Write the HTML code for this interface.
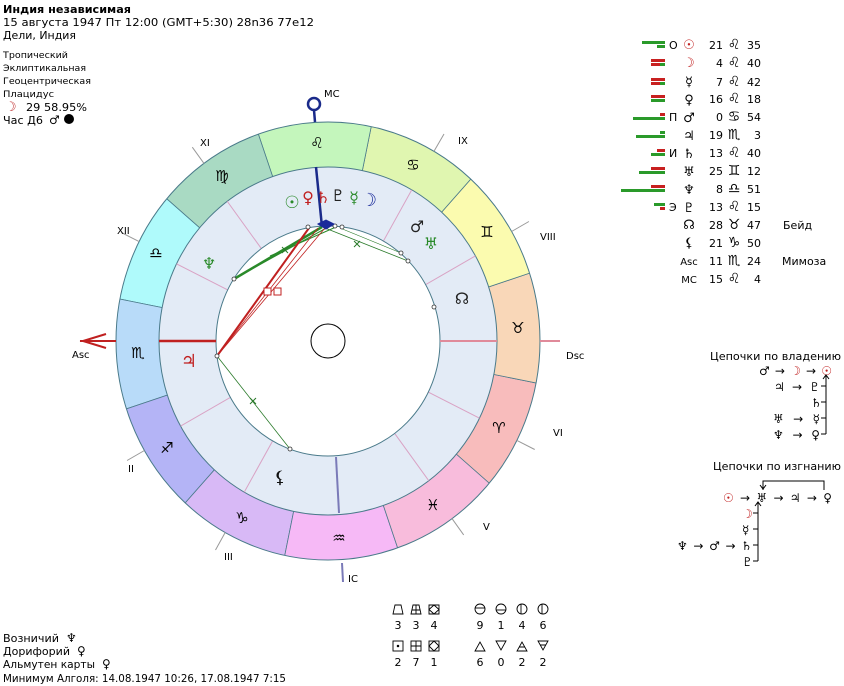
<!DOCTYPE html>
<html><head><meta charset="utf-8"><style>
html,body{margin:0;padding:0;background:#fff;}
svg{display:block;}
text{font-family:"DejaVu Sans","Liberation Sans",sans-serif;fill:#000;}
.g{font-family:"DejaVu Sans",sans-serif;}
</style></head><body>
<svg width="844" height="686" viewBox="0 0 844 686" xmlns="http://www.w3.org/2000/svg">
<defs>
<clipPath id="co"><ellipse cx="328" cy="341" rx="212" ry="219"/></clipPath>
<clipPath id="ch"><ellipse cx="328" cy="341" rx="169" ry="174"/></clipPath>
</defs>
<text x="3" y="13" font-size="11" font-weight="bold" textLength="128" lengthAdjust="spacingAndGlyphs">Индия независимая</text>
<text x="3" y="26" font-size="11" textLength="311" lengthAdjust="spacingAndGlyphs">15 августа 1947  Пт  12:00 (GMT+5:30) 28n36  77e12</text>
<text x="3" y="39" font-size="11" textLength="73" lengthAdjust="spacingAndGlyphs">Дели, Индия</text>
<text x="3" y="58" font-size="9" textLength="65" lengthAdjust="spacingAndGlyphs">Тропический</text>
<text x="3" y="71" font-size="9" textLength="83" lengthAdjust="spacingAndGlyphs">Эклиптикальная</text>
<text x="3" y="84" font-size="9" textLength="88" lengthAdjust="spacingAndGlyphs">Геоцентрическая</text>
<text x="3" y="97" font-size="9" textLength="51" lengthAdjust="spacingAndGlyphs">Плацидус</text>
<text x="5" y="111" font-size="13" class="g" style="fill:#c03030">☽</text>
<text x="26" y="111" font-size="11" textLength="61" lengthAdjust="spacingAndGlyphs">29 58.95%</text>
<text x="3" y="124" font-size="11" textLength="40" lengthAdjust="spacingAndGlyphs">Час Д6</text>
<text x="49" y="124" font-size="12" class="g">♂</text>
<circle cx="69" cy="119" r="5" fill="#000"/>

<g clip-path="url(#co)" stroke="#4a7a8a" stroke-width="0.8">
<polygon points="328,341 553,539.4 622.1,400.3" fill="#f8bcbc"/>
<polygon points="328,341 622.1,400.3 612.3,245.3" fill="#f9d7b8"/>
<polygon points="328,341 612.3,245.3 526.4,116" fill="#fbfbaf"/>
<polygon points="328,341 526.4,116 387.3,46.9" fill="#e0f6b0"/>
<polygon points="328,341 387.3,46.9 232.3,56.7" fill="#c4f6bc"/>
<polygon points="328,341 232.3,56.7 103,142.6" fill="#a9dac3"/>
<polygon points="328,341 103,142.6 33.9,281.7" fill="#affafb"/>
<polygon points="328,341 33.9,281.7 43.7,436.7" fill="#b8dbf9"/>
<polygon points="328,341 43.7,436.7 129.6,566" fill="#b4b4f6"/>
<polygon points="328,341 129.6,566 268.7,635.1" fill="#d8b9f6"/>
<polygon points="328,341 268.7,635.1 423.7,625.3" fill="#f6b9f6"/>
<polygon points="328,341 423.7,625.3 553,539.4" fill="#f8bcdc"/>
</g>
<ellipse cx="328" cy="341" rx="212" ry="219" fill="none" stroke="#4a7a8a" stroke-width="1"/>
<ellipse cx="328" cy="341" rx="169" ry="174" fill="#e3ebf6" stroke="#4a7a8a" stroke-width="1"/>
<g clip-path="url(#ch)" stroke="#d9a2c4" stroke-width="1">
<line x1="328" y1="341" x2="152.5" y2="97.7"/>
<line x1="328" y1="341" x2="60.7" y2="204.8"/>
<line x1="328" y1="341" x2="68.2" y2="491"/>
<line x1="328" y1="341" x2="182.6" y2="603.4"/>
<line x1="328" y1="341" x2="503.5" y2="584.3"/>
<line x1="328" y1="341" x2="595.3" y2="477.2"/>
<line x1="328" y1="341" x2="587.8" y2="191"/>
<line x1="328" y1="341" x2="473.4" y2="78.6"/>
</g>
<ellipse cx="328" cy="341" rx="112" ry="115" fill="#fff" stroke="#4a7a8a" stroke-width="1"/>
<circle cx="328" cy="341" r="17" fill="#fff" stroke="#000" stroke-width="1"/>

<line x1="159" y1="341" x2="216" y2="341" stroke="#c02020" stroke-width="2.5"/>
<line x1="80" y1="341" x2="116" y2="341" stroke="#c02020" stroke-width="2"/>
<polyline points="106,334 83,341 106,348" fill="none" stroke="#c02020" stroke-width="2"/>
<text x="72" y="358" font-size="10">Asc</text>
<line x1="440" y1="341" x2="497" y2="341" stroke="#e08a9a" stroke-width="2"/>
<line x1="540" y1="341" x2="560" y2="341" stroke="#e08a9a" stroke-width="2"/>
<text x="566" y="359" font-size="10">Dsc</text>
<line x1="316" y1="167" x2="322" y2="227" stroke="#1a2a8a" stroke-width="2.5"/>
<line x1="314" y1="110" x2="315" y2="122" stroke="#1a2a8a" stroke-width="2.5"/>
<circle cx="314" cy="104" r="6" fill="#fff" stroke="#1a2a8a" stroke-width="2.5"/>
<text x="324" y="97" font-size="10">MC</text>
<line x1="339" y1="513" x2="336" y2="457" stroke="#7a7ab8" stroke-width="2"/>
<line x1="342" y1="563" x2="343" y2="582" stroke="#7a7ab8" stroke-width="2"/>
<text x="348" y="582" font-size="10">IC</text>

<g stroke="#999" stroke-width="1">
<line x1="204" y1="163.4" x2="192.3" y2="147.2"/>
<line x1="139.1" y1="241.6" x2="121.3" y2="232.5"/>
<line x1="144.4" y1="450.5" x2="127.1" y2="460.5"/>
<line x1="225.2" y1="532.5" x2="215.5" y2="550"/>
<line x1="452" y1="518.6" x2="463.7" y2="534.9"/>
<line x1="516.9" y1="440.4" x2="534.7" y2="449.5"/>
<line x1="511.6" y1="231.5" x2="528.9" y2="221.5"/>
<line x1="434" y1="151.3" x2="444" y2="134"/>
</g>
<g font-size="10">
<text x="200" y="146">XI</text>
<text x="458" y="144">IX</text>
<text x="117" y="234">XII</text>
<text x="540" y="240">VIII</text>
<text x="128" y="472">II</text>
<text x="553" y="436">VI</text>
<text x="224" y="560">III</text>
<text x="483" y="530">V</text>
</g>

<g class="g" font-size="15" text-anchor="middle" fill="#222">
<text x="317" y="148">♌</text>
<text x="413" y="170">♋</text>
<text x="487" y="237">♊</text>
<text x="518" y="333">♉</text>
<text x="499" y="433">♈</text>
<text x="433" y="510">♓</text>
<text x="339" y="543">♒</text>
<text x="242" y="523">♑</text>
<text x="167" y="453">♐</text>
<text x="138" y="358">♏</text>
<text x="156" y="258">♎</text>
<text x="222" y="181">♍</text>
</g>

<g fill="none">
<line x1="234" y1="279" x2="322" y2="227" stroke="#2a8a2a" stroke-width="2.5"/>
<line x1="250" y1="270" x2="330" y2="226" stroke="#2a8a2a" stroke-width="1"/>
<line x1="270" y1="256" x2="336" y2="227" stroke="#2a8a2a" stroke-width="1"/>
<line x1="217" y1="356" x2="309" y2="228" stroke="#c02020" stroke-width="2"/>
<line x1="217" y1="356" x2="318" y2="228" stroke="#c02020" stroke-width="0.8"/>
<line x1="217" y1="356" x2="325" y2="228" stroke="#c02020" stroke-width="0.8"/>
<line x1="217" y1="356" x2="290" y2="449" stroke="#2a7a2a" stroke-width="0.8"/>
<line x1="325" y1="228" x2="408" y2="261" stroke="#2a7a2a" stroke-width="0.8"/>
<line x1="340" y1="228" x2="401" y2="253" stroke="#2a7a2a" stroke-width="0.6"/>
<rect x="264" y="288" width="7" height="7" stroke="#c02020" fill="#fff"/>
<rect x="274" y="288" width="7" height="7" stroke="#c02020" fill="#fff"/>
<path d="M250 398l6 6M256 398l-6 6M354 241l6 6M360 241l-6 6M282 247l6 6M288 247l-6 6" stroke="#2a7a2a"/>
<g stroke="#333" fill="#fff" stroke-width="0.8">
<circle cx="308" cy="227" r="2"/><circle cx="335" cy="226" r="2"/><circle cx="342" cy="227" r="2"/>
<circle cx="401" cy="253" r="2"/><circle cx="408" cy="261" r="2"/><circle cx="434" cy="307" r="2"/>
<circle cx="234" cy="279" r="2"/><circle cx="217" cy="356" r="2"/><circle cx="290" cy="449" r="2"/>
</g>
<path d="M318 224l8 -4l8 4l-8 5z" fill="#1a2a9a" stroke="#1a2a9a"/>
</g>

<g class="g" text-anchor="middle">
<text x="292" y="208" font-size="17" style="fill:#2a8a2a">☉</text>
<text x="308" y="203" font-size="16" style="fill:#c02020">♀</text>
<text x="323" y="203" font-size="16" style="fill:#c02020">♄</text>
<text x="338" y="201" font-size="16" style="fill:#222">♇</text>
<text x="354" y="203" font-size="16" style="fill:#2a8a2a">☿</text>
<text x="369" y="206" font-size="18" style="fill:#1a2a9a">☽</text>
<text x="417" y="232" font-size="16" style="fill:#222">♂</text>
<text x="431" y="249" font-size="16" style="fill:#2a8a2a">♅</text>
<text x="462" y="304" font-size="16" style="fill:#222">☊</text>
<text x="209" y="269" font-size="16" style="fill:#2a8a2a">♆</text>
<text x="189" y="367" font-size="18" style="fill:#c02020">♃</text>
<text x="280" y="483" font-size="17" style="fill:#111">⚸</text>
</g>

<g>
<rect x="642" y="41" width="23" height="3" fill="#2a9a2a"/><rect x="657" y="45" width="8" height="3" fill="#2a9a2a"/>
<rect x="651" y="59" width="14" height="3" fill="#c82020"/><rect x="651" y="63" width="9" height="3" fill="#c82020"/><rect x="660" y="63" width="5" height="3" fill="#2a9a2a"/>
<rect x="651" y="78" width="14" height="3" fill="#c82020"/><rect x="651" y="82" width="9" height="3" fill="#c82020"/><rect x="660" y="82" width="5" height="3" fill="#2a9a2a"/>
<rect x="651" y="95" width="14" height="3" fill="#c82020"/><rect x="651" y="99" width="14" height="3" fill="#2a9a2a"/>
<rect x="660" y="113" width="5" height="3" fill="#c82020"/><rect x="633" y="117" width="32" height="3" fill="#2a9a2a"/>
<rect x="660" y="131" width="5" height="3" fill="#2a9a2a"/><rect x="636" y="135" width="29" height="3" fill="#2a9a2a"/>
<rect x="657" y="149" width="8" height="3" fill="#c82020"/><rect x="651" y="153" width="14" height="3" fill="#2a9a2a"/>
<rect x="651" y="167" width="14" height="3" fill="#c82020"/><rect x="639" y="171" width="26" height="3" fill="#2a9a2a"/>
<rect x="651" y="185" width="14" height="3" fill="#c82020"/><rect x="621" y="189" width="44" height="3" fill="#2a9a2a"/>
<rect x="654" y="203" width="11" height="3" fill="#2a9a2a"/><rect x="660" y="207" width="5" height="3" fill="#c82020"/>
</g>
<g font-size="11">
<text x="669" y="49">О</text><text x="669" y="121">П</text><text x="669" y="157">И</text><text x="669" y="211">Э</text>
</g>
<g class="g" font-size="13" text-anchor="middle">
<text x="689" y="49" style="fill:#c02020">☉</text>
<text x="689" y="67" style="fill:#c02020">☽</text>
<text x="689" y="86">☿</text><text x="689" y="104">♀</text><text x="689" y="122">♂</text>
<text x="689" y="140">♃</text><text x="689" y="158">♄</text><text x="689" y="176">♅</text>
<text x="689" y="194">♆</text><text x="689" y="212">♇</text><text x="689" y="229">☊</text>
<text x="689" y="247">⚸</text>
</g>
<text x="689" y="265" font-size="10" text-anchor="middle">Asc</text>
<text x="689" y="283" font-size="10" text-anchor="middle">MC</text>
<g font-size="11" text-anchor="end">
<text x="723" y="49">21</text><text x="723" y="67">4</text><text x="723" y="86">7</text><text x="723" y="103">16</text>
<text x="723" y="121">0</text><text x="723" y="139">19</text><text x="723" y="157">13</text><text x="723" y="175">25</text>
<text x="723" y="193">8</text><text x="723" y="211">13</text><text x="723" y="229">28</text><text x="723" y="247">21</text>
<text x="723" y="265">11</text><text x="723" y="283">15</text>
<text x="761" y="49">35</text><text x="761" y="67">40</text><text x="761" y="86">42</text><text x="761" y="103">18</text>
<text x="761" y="121">54</text><text x="761" y="139">3</text><text x="761" y="157">40</text><text x="761" y="175">12</text>
<text x="761" y="193">51</text><text x="761" y="211">15</text><text x="761" y="229">47</text><text x="761" y="247">50</text>
<text x="761" y="265">24</text><text x="761" y="283">4</text>
</g>
<g class="g" font-size="14" text-anchor="middle">
<text x="734" y="49">♌</text><text x="734" y="67">♌</text><text x="734" y="86">♌</text><text x="734" y="103">♌</text>
<text x="734" y="121">♋</text><text x="734" y="139">♏</text><text x="734" y="157">♌</text><text x="734" y="175">♊</text>
<text x="734" y="193">♎</text><text x="734" y="211">♌</text><text x="734" y="229">♉</text><text x="734" y="247">♑</text>
<text x="734" y="265">♏</text><text x="734" y="283">♌</text>
</g>
<text x="783" y="229" font-size="11">Бейд</text>
<text x="782" y="265" font-size="11">Мимоза</text>

<text x="710" y="360" font-size="11" textLength="131" lengthAdjust="spacingAndGlyphs">Цепочки по владению</text>
<g class="g" font-size="12">
<text x="759" y="375" textLength="73" lengthAdjust="spacing"><tspan>♂ → </tspan><tspan style="fill:#c02020">☽</tspan><tspan> → </tspan><tspan style="fill:#c02020">☉</tspan></text>
<text x="774" y="391" textLength="46" lengthAdjust="spacing">♃ → ♇</text>
<text x="811" y="407">♄</text>
<text x="773" y="423" textLength="47" lengthAdjust="spacing">♅ → ☿</text>
<text x="773" y="439" textLength="47" lengthAdjust="spacing">♆ → ♀</text>
</g>
<path d="M826 376V434M821 386h5M821 402h5M821 418h5M821 434h5M823 379l3-4l3 4" stroke="#000" fill="none"/>
<text x="713" y="470" font-size="11" textLength="128" lengthAdjust="spacingAndGlyphs">Цепочки по изгнанию</text>
<path d="M763 490V481H824V490M760 485l3 4l3-4" stroke="#000" fill="none"/>
<g class="g" font-size="12">
<text x="723" y="502" textLength="109" lengthAdjust="spacing"><tspan style="fill:#c02020">☉</tspan><tspan> → ♅ → ♃ → ♀</tspan></text>
<text x="742" y="518" style="fill:#c02020">☽</text>
<text x="742" y="534">☿</text>
<text x="677" y="550" textLength="75" lengthAdjust="spacing">♆ → ♂ → ♄</text>
<text x="742" y="566">♇</text>
</g>
<path d="M758 503V561M753 513h5M753 529h5M753 545h5M753 561h5M755 506l3-4l3 4" stroke="#000" fill="none"/>

<g font-size="11">
<text x="3" y="642" textLength="56" lengthAdjust="spacingAndGlyphs">Возничий</text><text x="66" y="642" class="g" font-size="12">♆</text>
<text x="3" y="655" textLength="67" lengthAdjust="spacingAndGlyphs">Дорифорий</text><text x="77" y="655" class="g" font-size="12">♀</text>
<text x="3" y="668" textLength="92" lengthAdjust="spacingAndGlyphs">Альмутен карты</text><text x="102" y="668" class="g" font-size="12">♀</text>
<text x="3" y="682" textLength="283" lengthAdjust="spacingAndGlyphs">Минимум Алголя: 14.08.1947 10:26,  17.08.1947  7:15</text>
</g>

<g fill="none" stroke="#000" stroke-width="0.9">
<path d="M393 614h10l-2-9h-6z"/>
<path d="M411 614h10l-2-9h-6zM416 605v9M412 610h8"/>
<path d="M429 605h10v9h-10zM434 605l5 4.5l-5 4.5l-5-4.5z"/>
<circle cx="480" cy="609" r="5"/><path d="M475 608h10"/>
<circle cx="501" cy="609" r="5"/><path d="M496 610h10"/>
<circle cx="522" cy="609" r="5"/><path d="M521 604v10"/>
<circle cx="543" cy="609" r="5"/><path d="M542 604v10"/>
<rect x="393" y="641" width="10" height="10"/><circle cx="398" cy="646" r="0.8" fill="#000"/>
<rect x="411" y="641" width="10" height="10"/><path d="M416 641v10M411 646h10"/>
<rect x="429" y="641" width="10" height="10"/><path d="M434 641l5 5l-5 5l-5-5z"/>
<path d="M475 651h10l-5-9z"/>
<path d="M496 641h10l-5 9z"/>
<path d="M517 651h10l-5-9zM519 647h6"/>
<path d="M538 641h10l-5 9zM540 645h6"/>
</g>
<g font-size="11" text-anchor="middle">
<text x="398" y="629">3</text><text x="416" y="629">3</text><text x="434" y="629">4</text>
<text x="480" y="629">9</text><text x="501" y="629">1</text><text x="522" y="629">4</text><text x="543" y="629">6</text>
<text x="398" y="666">2</text><text x="416" y="666">7</text><text x="434" y="666">1</text>
<text x="480" y="666">6</text><text x="501" y="666">0</text><text x="522" y="666">2</text><text x="543" y="666">2</text>
</g>
</svg>
</body></html>
